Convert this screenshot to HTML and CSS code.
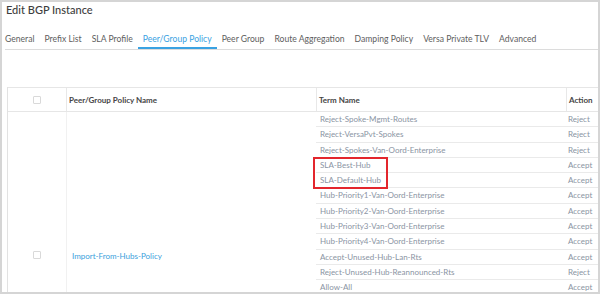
FILE: index.html
```html
<!DOCTYPE html>
<html>
<head>
<meta charset="utf-8">
<link rel="stylesheet" href="styles.css">
</head>
<body>
<div class="frame">
  <h1 class="title">Edit BGP Instance</h1>
  <nav class="tabs">
    <span class="tab">General</span>
    <span class="tab">Prefix List</span>
    <span class="tab">SLA Profile</span>
    <span class="tab active">Peer/Group Policy</span>
    <span class="tab">Peer Group</span>
    <span class="tab">Route Aggregation</span>
    <span class="tab">Damping Policy</span>
    <span class="tab">Versa Private TLV</span>
    <span class="tab">Advanced</span>
  </nav>
  <div class="tbl">
    <div class="thead">
      <div class="th th-check"><span class="cb"></span></div>
      <div class="th">Peer/Group Policy Name</div>
      <div class="th">Term Name</div>
      <div class="th">Action</div>
    </div>
    <div class="tbody">
      <div class="td td-check"><span class="cb"></span></div>
      <div class="td td-name"><a class="link">Import-From-Hubs-Policy</a></div>
      <div class="td td-terms">
        <div class="row">Reject-Spoke-Mgmt-Routes</div>
        <div class="row">Reject-VersaPvt-Spokes</div>
        <div class="row">Reject-Spokes-Van-Oord-Enterprise</div>
        <div class="row">SLA-Best-Hub</div>
        <div class="row">SLA-Default-Hub</div>
        <div class="row">Hub-Priority1-Van-Oord-Enterprise</div>
        <div class="row">Hub-Priority2-Van-Oord-Enterprise</div>
        <div class="row">Hub-Priority3-Van-Oord-Enterprise</div>
        <div class="row">Hub-Priority4-Van-Oord-Enterprise</div>
        <div class="row">Accept-Unused-Hub-Lan-Rts</div>
        <div class="row">Reject-Unused-Hub-Reannounced-Rts</div>
        <div class="row">Allow-All</div>
        <div class="highlight"></div>
      </div>
      <div class="td td-actions">
        <div class="row">Reject</div>
        <div class="row">Reject</div>
        <div class="row">Reject</div>
        <div class="row">Accept</div>
        <div class="row">Accept</div>
        <div class="row">Accept</div>
        <div class="row">Accept</div>
        <div class="row">Accept</div>
        <div class="row">Accept</div>
        <div class="row">Accept</div>
        <div class="row">Reject</div>
        <div class="row">Accept</div>
      </div>
    </div>
  </div>
</div>
</body>
</html>
```

FILE: styles.css
```css
html, body {
  margin: 0;
  padding: 0;
  background: #ffffff;
}

body {
  width: 600px;
  height: 294px;
  overflow: hidden;
  font-family: Lato, "Open Sans", "Liberation Sans", sans-serif;
}

.frame {
  box-sizing: border-box;
  width: 600px;
  height: 294px;
  border: 2px solid #d5d5d5;
  padding: 1px 0 0 3px;
  overflow: hidden;
}

.title {
  margin: 0 0 0 1px;
  font-size: 11px;
  line-height: 14px;
  font-weight: 500;
  color: #3d3d3d;
}

.tabs {
  display: flex;
  margin-top: 16px;
  border-bottom: 1px solid #dcdcdc;
}

.tab {
  padding: 0 5px 2px;
  font-size: 8.6px;
  line-height: 12px;
  color: #5e5e5e;
  border-bottom: 2px solid transparent;
  white-space: nowrap;
}

.tab:first-child {
  padding-left: 0;
}

.tab.active {
  color: #3aa2e2;
  border-bottom-color: #3aa2e2;
}

.tbl {
  margin: 37px 0 0 2px;
  border-left: 1px solid #e2e2e2;
}

.thead {
  display: grid;
  grid-template-columns: 58px 250px 250px 1fr;
  height: 25px;
  box-sizing: border-box;
  border-top: 1px solid #e6e6e6;
  border-bottom: 1px solid #e6e6e6;
}

.th {
  display: flex;
  align-items: center;
  padding-left: 2px;
  border-left: 1px solid #e8e8e8;
  font-size: 8px;
  font-weight: 700;
  color: #454545;
  white-space: nowrap;
}

.th-check {
  border-left: none;
  justify-content: center;
  padding-left: 0;
}

.cb {
  display: inline-block;
  box-sizing: border-box;
  width: 8px;
  height: 8px;
  border: 1px solid #d9d9d9;
  border-radius: 1px;
  background: #ffffff;
}

.tbody {
  display: grid;
  grid-template-columns: 58px 250px 247px 1fr;
  height: 288px;
}

.td-check {
  display: flex;
  align-items: center;
  justify-content: center;
  padding-bottom: 3px;
}

.td-name {
  display: flex;
  align-items: center;
  padding-left: 5px;
  border-left: 1px solid #f1f1f1;
}

.link {
  font-size: 8px;
  color: #3aa0dc;
  white-space: nowrap;
}

.td-terms,
.td-actions {
  position: relative;
}

.row {
  box-sizing: border-box;
  height: 15.3px;
  line-height: 14.3px;
  border-bottom: 1px solid #eaeaea;
  padding-left: 4px;
  font-size: 8px;
  color: #8a94a3;
  white-space: nowrap;
}

.td-actions .row {
  padding-left: 5px;
}

.highlight {
  position: absolute;
  left: -3px;
  top: 44.7px;
  width: 75px;
  height: 32px;
  box-sizing: border-box;
  border: 2.4px solid #e3262d;
}
```
